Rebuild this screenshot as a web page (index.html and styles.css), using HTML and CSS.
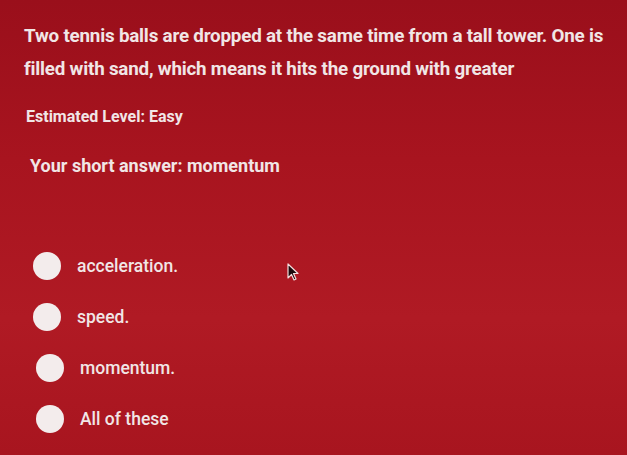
FILE: index.html
```html
<!DOCTYPE html>
<html>
<head>
<meta charset="utf-8">
<link rel="stylesheet" href="styles.css">
</head>
<body>
<div class="screen">
  <div class="question">
    <p class="prompt">Two tennis balls are dropped at the same time from a tall tower. One is filled with sand, which means it hits the ground with greater</p>
    <p class="level">Estimated Level: Easy</p>
    <p class="answer">Your short answer: momentum</p>
  </div>
  <ul class="options">
    <li class="option"><span class="radio"></span><span class="label">acceleration.</span></li>
    <li class="option"><span class="radio"></span><span class="label">speed.</span></li>
    <li class="option"><span class="radio"></span><span class="label">momentum.</span></li>
    <li class="option"><span class="radio"></span><span class="label">All of these</span></li>
  </ul>
  <svg class="cursor" width="14" height="20" viewBox="0 0 14 20"><path d="M1 1 L1 15 L4.5 11.5 L7 17 L9 16 L6.5 10.5 L11 10.5 Z" fill="#1a0a0c" stroke="#f2dede" stroke-width="1.2" stroke-linejoin="round"/></svg>
</div>
</body>
</html>
```

FILE: styles.css
```css
html, body {
  margin: 0;
  padding: 0;
}
body {
  width: 627px;
  height: 455px;
  overflow: hidden;
  font-family: Roboto, "Noto Sans", sans-serif;
}
.screen {
  position: relative;
  width: 627px;
  height: 455px;
  box-sizing: border-box;
  padding: 20px 0 0 24px;
  background: linear-gradient(180deg, #9a0f1b 0%, #a8141f 35%, #b01a24 70%, #a8151f 100%);
  color: #f1e6e6;
}
.question p {
  margin: 0;
}
.prompt {
  font-weight: 700;
  font-size: 18.8px;
  line-height: 33px;
  letter-spacing: -0.2px;
  width: 600px;
}
.question .level {
  font-weight: 700;
  font-size: 16px;
  line-height: 20px;
  letter-spacing: 0;
  margin-top: 21px;
  padding-left: 2px;
}
.question .answer {
  font-weight: 700;
  font-size: 18px;
  line-height: 22px;
  letter-spacing: 0;
  margin-top: 28px;
  padding-left: 6px;
}
.options {
  list-style: none;
  margin: 75px 0 0 0;
  padding: 0 0 0 9px;
  display: flex;
  flex-direction: column;
  gap: 23px;
}
.option {
  display: flex;
  align-items: center;
  gap: 16px;
  height: 28px;
}
.option:nth-child(3), .option:nth-child(4) {
  padding-left: 3px;
}
.radio {
  width: 28px;
  height: 28px;
  border-radius: 50%;
  background: #f3ecec;
  flex: none;
}
.label {
  font-size: 17.5px;
  font-weight: 500;
  letter-spacing: 0;
}
.cursor {
  position: absolute;
  left: 287px;
  top: 263px;
}
```
